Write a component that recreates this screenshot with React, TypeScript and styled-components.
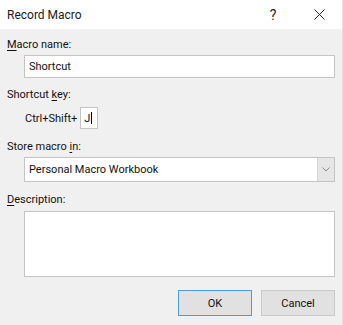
import styled, { createGlobalStyle } from 'styled-components';

const GlobalStyle = createGlobalStyle`
  html, body {
    margin: 0;
    padding: 0;
    background: #ffffff;
  }
  * {
    box-sizing: border-box;
  }
`;

const Dialog = styled.div`
  width: 343px;
  height: 325px;
  display: flex;
  flex-direction: column;
  font-family: Roboto, 'Noto Sans', sans-serif;
  font-size: 11px;
  color: #111111;
  background: #f0f0f0;
  border-right: 1px solid #e2e2e2;
  overflow: hidden;
`;

const TitleBar = styled.div`
  height: 29px;
  flex: none;
  display: flex;
  align-items: center;
  background: #ffffff;
  padding-left: 7px;
`;

const Title = styled.div`
  flex: 1;
  font-size: 12px;
  color: #1a1a1a;
`;

const TitleButton = styled.div`
  width: 46px;
  height: 29px;
  display: flex;
  align-items: center;
  justify-content: center;
  color: #222222;
  font-size: 14px;
`;

const Body = styled.div`
  flex: 1;
  display: flex;
  flex-direction: column;
  padding: 8px 7px 0 7px;
`;

const Label = styled.div<{ $top?: number }>`
  height: 16px;
  line-height: 16px;
  margin-top: ${(p) => p.$top ?? 0}px;
  white-space: nowrap;
`;

const Key = styled.span`
  text-decoration: underline;
  text-underline-offset: 2px;
`;

const Field = styled.div<{ $top: number; $height: number }>`
  margin: ${(p) => p.$top}px 0 0 17px;
  height: ${(p) => p.$height}px;
  background: #ffffff;
  border: 1px solid #c4c4c4;
  display: flex;
  align-items: center;
  padding-left: 4px;
`;

const ShortcutRow = styled.div`
  margin: 4px 0 0 18px;
  display: flex;
  align-items: center;
  gap: 3px;
`;

const KeyBox = styled.div`
  width: 18px;
  height: 22px;
  background: #ffffff;
  border: 1px solid #c4c4c4;
  display: flex;
  align-items: center;
  padding-left: 3px;
`;

const Caret = styled.span`
  display: inline-block;
  width: 1px;
  height: 12px;
  background: #000000;
  margin-left: 1px;
`;

const SelectText = styled.div`
  flex: 1;
`;

const DropButton = styled.div`
  width: 17px;
  align-self: stretch;
  display: flex;
  align-items: center;
  justify-content: center;
  background: #e6e6e6;
  border-left: 1px solid #d4d4d4;
`;

const Buttons = styled.div`
  margin-top: 13px;
  display: flex;
  justify-content: flex-end;
  gap: 9px;
`;

const Button = styled.div<{ $primary?: boolean }>`
  width: 74px;
  height: 26px;
  display: flex;
  align-items: center;
  justify-content: center;
  background: #e1e1e1;
  border: 1px solid ${(p) => (p.$primary ? '#4a9ee0' : '#c9c9c9')};
`;

export default function App() {
  return (
    <>
      <GlobalStyle />
      <Dialog>
        <TitleBar>
          <Title>Record Macro</Title>
          <TitleButton>?</TitleButton>
          <TitleButton>
            <svg width="11" height="11" viewBox="0 0 11 11">
              <path d="M0.5 0.5 L10.5 10.5 M10.5 0.5 L0.5 10.5" stroke="#222" strokeWidth="1" fill="none" />
            </svg>
          </TitleButton>
        </TitleBar>
        <Body>
          <Label>
            <Key>M</Key>acro name:
          </Label>
          <Field $top={2} $height={23}>Shortcut</Field>

          <Label $top={9}>
            Shortcut <Key>k</Key>ey:
          </Label>
          <ShortcutRow>
            <span>Ctrl+Shift+</span>
            <KeyBox>
              J<Caret />
            </KeyBox>
          </ShortcutRow>

          <Label $top={10}>
            Store macro <Key>i</Key>n:
          </Label>
          <Field $top={2} $height={25}>
            <SelectText>Personal Macro Workbook</SelectText>
            <DropButton>
              <svg width="8" height="5" viewBox="0 0 8 5">
                <path d="M0.5 0.5 L4 4 L7.5 0.5" stroke="#8a8a8a" strokeWidth="1" fill="none" />
              </svg>
            </DropButton>
          </Field>

          <Label $top={10}>
            <Key>D</Key>escription:
          </Label>
          <Field $top={3} $height={66} />

          <Buttons>
            <Button $primary>OK</Button>
            <Button>Cancel</Button>
          </Buttons>
        </Body>
      </Dialog>
    </>
  );
}
